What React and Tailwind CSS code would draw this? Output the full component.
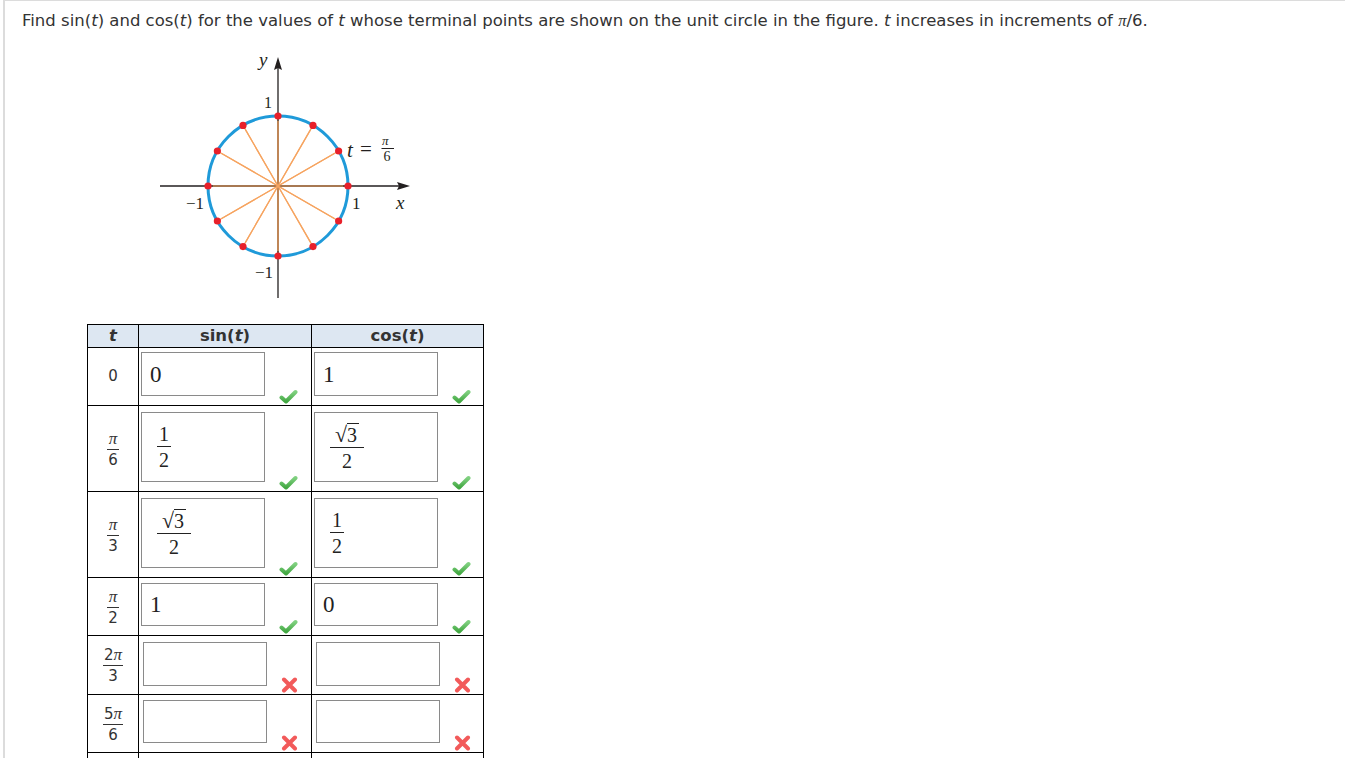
import React from "react";

const SANS = "font-['DejaVu_Sans',Verdana,sans-serif]";
const SERIF = "font-['Liberation_Serif','Times_New_Roman',serif]";

function Check() {
  return (
    <svg width="19" height="15" viewBox="0 0 19 15" className="block">
      <defs>
        <linearGradient id="gck" x1="0" y1="0" x2="0" y2="1">
          <stop offset="0" stopColor="#7fd07f" />
          <stop offset="1" stopColor="#43a843" />
        </linearGradient>
      </defs>
      <path d="M2.5 8.5 L7 12.5 L16.5 3" fill="none" stroke="url(#gck)" strokeWidth="4" strokeLinecap="round" strokeLinejoin="round" />
    </svg>
  );
}

function Cross() {
  return (
    <svg width="17" height="16" viewBox="0 0 17 16" className="block">
      <path d="M3 2.5 L14 13.5 M14 2.5 L3 13.5" fill="none" stroke="#f25a5a" strokeWidth="4" strokeLinecap="round" />
    </svg>
  );
}

function Frac({ num, den, size = "text-[20px]", bar = "px-[2px]" }) {
  return (
    <span className={`inline-flex flex-col items-center leading-none ${size}`}>
      <span className={`${bar} pb-[2px]`}>{num}</span>
      <span className="self-stretch border-t border-[#222]" />
      <span className={`${bar} pt-[3px]`}>{den}</span>
    </span>
  );
}

function Sqrt3() {
  return (
    <span className="inline-flex items-end">
      <span className="text-[22px] leading-none relative top-[1px]">√</span>
      <span className="border-t border-[#222] pt-[1px] pr-[2px] leading-none">3</span>
    </span>
  );
}

function TFrac({ num, den }) {
  return (
    <span className="inline-flex flex-col items-center leading-none text-[15px] text-[#333]">
      <span className="px-[1px] pb-[2px]">{num}</span>
      <span className="self-stretch border-t border-[#333]" />
      <span className={`px-[1px] pt-[3px] ${SANS}`}>{den}</span>
    </span>
  );
}

const Pi = () => <span className={`${SERIF} italic text-[17px]`}>π</span>;

function Cell({ value, ok, wrap, box }) {
  return (
    <td className="border border-black p-0 align-top">
      <div className={`flex ${wrap}`}>
        <div className={`border border-[#8a8a8a] bg-white flex items-center ${box} ${SERIF} text-[#222]`}>
          {value}
        </div>
        <div className="self-end ml-[14px] mb-[1px]">{ok ? <Check /> : <Cross />}</div>
      </div>
    </td>
  );
}

const one = <span className="pl-[8px] text-[23px] leading-none">1</span>;
const zero = <span className="pl-[8px] text-[23px] leading-none">0</span>;
const half = (
  <span className="pl-[15px]">
    <Frac num="1" den="2" />
  </span>
);
const r3half = (
  <span className="pl-[15px]">
    <Frac num={<Sqrt3 />} den="2" bar="px-[5px]" />
  </span>
);

const rows = [
  {
    t: <span className={`${SANS} text-[15px] text-[#333]`}>0</span>,
    h: "h-[57px]",
    wrap: "h-[57px] pt-[4px] pl-[2px]",
    box: "w-[124px] h-[44px]",
    sin: zero,
    cos: one,
    ok: true,
  },
  {
    t: <TFrac num={<Pi />} den="6" />,
    h: "h-[85px]",
    wrap: "h-[85px] pt-[6px] pl-[2px]",
    box: "w-[124px] h-[70px]",
    sin: half,
    cos: r3half,
    ok: true,
  },
  {
    t: <TFrac num={<Pi />} den="3" />,
    h: "h-[85px]",
    wrap: "h-[85px] pt-[6px] pl-[2px]",
    box: "w-[124px] h-[70px]",
    sin: r3half,
    cos: half,
    ok: true,
  },
  {
    t: <TFrac num={<Pi />} den="2" />,
    h: "h-[57px]",
    wrap: "h-[57px] pt-[5px] pl-[2px]",
    box: "w-[124px] h-[43px]",
    sin: one,
    cos: zero,
    ok: true,
  },
  {
    t: <TFrac num={<span><span className={SANS}>2</span><Pi /></span>} den="3" />,
    h: "h-[58px]",
    wrap: "h-[58px] pt-[6px] pl-[4px]",
    box: "w-[124px] h-[44px]",
    sin: null,
    cos: null,
    ok: false,
  },
  {
    t: <TFrac num={<span><span className={SANS}>5</span><Pi /></span>} den="6" />,
    h: "h-[57px]",
    wrap: "h-[57px] pt-[5px] pl-[4px]",
    box: "w-[124px] h-[43px]",
    sin: null,
    cos: null,
    ok: false,
  },
  {
    t: <Pi />,
    h: "h-[57px]",
    wrap: "h-[57px] pt-[5px] pl-[4px]",
    box: "w-[124px] h-[43px]",
    sin: null,
    cos: null,
    ok: false,
  },
];

function UnitCircle() {
  const cx = 128;
  const cy = 141;
  const r = 70;
  const pts = Array.from({ length: 12 }, (_, k) => {
    const a = (k * Math.PI) / 6;
    return [cx + r * Math.cos(a), cy - r * Math.sin(a)];
  });
  const serif = "Liberation Serif, Times New Roman, serif";
  return (
    <svg width="270" height="260" viewBox="0 0 270 260" className="block">
      {pts.map(([x, y], i) => (
        <line key={"l" + i} x1={cx} y1={cy} x2={x} y2={y} stroke="#f6a460" strokeWidth="1.2" />
      ))}
      <line x1="10" y1={cy} x2="250" y2={cy} stroke="#231f20" strokeWidth="1.3" />
      <path d="M260 141 L247 137 L249 141 L247 145 Z" fill="#231f20" />
      <line x1={cx} y1="253" x2={cx} y2="22" stroke="#231f20" strokeWidth="1.3" />
      <path d="M128 12 L124 25 L128 23 L132 25 Z" fill="#231f20" />
      <circle cx={cx} cy={cy} r={r} fill="none" stroke="#1f9ad9" strokeWidth="3" />
      {pts.map(([x, y], i) => (
        <line key={"o" + i} x1={cx} y1={cy} x2={cx + (x - cx) * 0.93} y2={cy + (y - cy) * 0.93} stroke="#f6a460" strokeWidth="1.2" />
      ))}
      {pts.map(([x, y], i) => (
        <circle key={"p" + i} cx={x} cy={y} r="3.6" fill="#e8202a" />
      ))}
      <text x="109" y="21" fontFamily={serif} fontStyle="italic" fontSize="19" fill="#231f20">y</text>
      <text x="114" y="63" fontFamily={serif} fontSize="16" fill="#231f20">1</text>
      <text x="54" y="164" textAnchor="end" fontFamily={serif} fontSize="17" fill="#231f20">−1</text>
      <text x="202" y="164" fontFamily={serif} fontSize="17" fill="#231f20">1</text>
      <text x="246" y="164" fontFamily={serif} fontStyle="italic" fontSize="19" fill="#231f20">x</text>
      <text x="123" y="233" textAnchor="end" fontFamily={serif} fontSize="17" fill="#231f20">−1</text>
      <text x="197" y="112" fontFamily={serif} fontStyle="italic" fontSize="21" fill="#231f20">t</text>
      <text x="210" y="111" fontFamily={serif} fontSize="21" fill="#231f20">=</text>
      <text x="232" y="100" fontFamily={serif} fontStyle="italic" fontSize="13" fill="#231f20">π</text>
      <line x1="231.5" y1="103.5" x2="244" y2="103.5" stroke="#231f20" strokeWidth="1" />
      <text x="233.5" y="115.5" fontFamily={serif} fontSize="14" fill="#231f20">6</text>
    </svg>
  );
}

export default function App() {
  return (
    <div className="bg-white min-h-[758px]">
      <div className="ml-[3px] border-l-2 border-t border-[#dcdcdc] min-h-[758px] flex flex-col items-start">
        <p className={`${SANS} text-[16.5px] leading-[22px] text-[#333] pl-[17px] pt-[9px]`}>
          Find sin(<i>t</i>) and cos(<i>t</i>) for the values of <i>t</i> whose terminal points are shown on the unit circle in the figure. <i>t</i> increases in increments of <i className={SERIF}>π</i>/6.
        </p>
        <div className="ml-[145px] mt-[13px]">
          <UnitCircle />
        </div>
        <table className="ml-[82px] mt-[19px] border-collapse">
          <thead>
            <tr>
              <th className="border border-black p-0 bg-[#dde7f2]">
                <div className={`w-[50px] h-[22px] flex items-center justify-center ${SANS} text-[16.5px] font-bold text-[#333]`}>
                  <i>t</i>
                </div>
              </th>
              <th className="border border-black p-0 bg-[#dde7f2]">
                <div className={`w-[172px] h-[22px] flex items-center justify-center ${SANS} text-[16.5px] font-bold text-[#333]`}>
                  <span>sin(<i>t</i>)</span>
                </div>
              </th>
              <th className="border border-black p-0 bg-[#dde7f2]">
                <div className={`w-[171px] h-[22px] flex items-center justify-center ${SANS} text-[16.5px] font-bold text-[#333]`}>
                  <span>cos(<i>t</i>)</span>
                </div>
              </th>
            </tr>
          </thead>
          <tbody>
            {rows.map((r, i) => (
              <tr key={i}>
                <td className="border border-black p-0 align-middle">
                  <div className={`w-[50px] ${r.h} flex items-center justify-center ${SERIF}`}>{r.t}</div>
                </td>
                <Cell value={r.sin} ok={r.ok} wrap={`w-[172px] ${r.wrap}`} box={r.box} />
                <Cell value={r.cos} ok={r.ok} wrap={`w-[171px] ${r.wrap}`} box={r.box} />
              </tr>
            ))}
          </tbody>
        </table>
      </div>
    </div>
  );
}
